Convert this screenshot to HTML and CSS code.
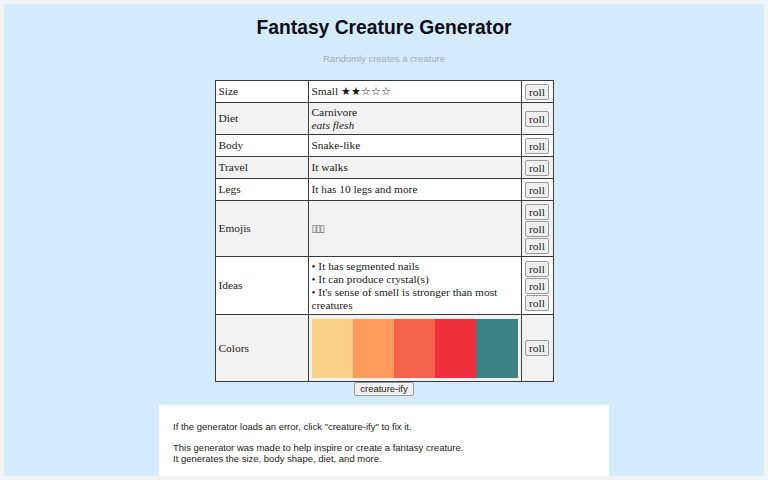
FILE: index.html
```html
<!DOCTYPE html>
<html lang="en">
<head>
<meta charset="utf-8">
<title>Fantasy Creature Generator</title>
<link rel="stylesheet" href="styles.css">
</head>
<body>
<div class="page">
  <h1 class="title">Fantasy Creature Generator</h1>
  <p class="subtitle">Randomly creates a creature</p>
  <table class="gen">
    <tr class="odd">
      <td class="label">Size</td>
      <td class="value">Small ★★☆☆☆</td>
      <td class="act"><button class="roll">roll</button></td>
    </tr>
    <tr class="even">
      <td class="label">Diet</td>
      <td class="value">Carnivore<br><i>eats flesh</i></td>
      <td class="act"><button class="roll">roll</button></td>
    </tr>
    <tr class="odd">
      <td class="label">Body</td>
      <td class="value">Snake-like</td>
      <td class="act"><button class="roll">roll</button></td>
    </tr>
    <tr class="even">
      <td class="label">Travel</td>
      <td class="value">It walks</td>
      <td class="act"><button class="roll">roll</button></td>
    </tr>
    <tr class="odd">
      <td class="label">Legs</td>
      <td class="value">It has 10 legs and more</td>
      <td class="act"><button class="roll">roll</button></td>
    </tr>
    <tr class="even">
      <td class="label">Emojis</td>
      <td class="value"><span class="emoji">▯▯▯</span></td>
      <td class="act"><div class="stack"><button class="roll">roll</button><button class="roll">roll</button><button class="roll">roll</button></div></td>
    </tr>
    <tr class="odd">
      <td class="label">Ideas</td>
      <td class="value">• It has segmented nails<br>• It can produce crystal(s)<br>• It's sense of smell is stronger than most creatures</td>
      <td class="act"><div class="stack"><button class="roll">roll</button><button class="roll">roll</button><button class="roll">roll</button></div></td>
    </tr>
    <tr class="even">
      <td class="label">Colors</td>
      <td class="value">
        <div class="swatches">
          <div class="sw sw1"></div>
          <div class="sw sw2"></div>
          <div class="sw sw3"></div>
          <div class="sw sw4"></div>
          <div class="sw sw5"></div>
        </div>
      </td>
      <td class="act"><button class="roll">roll</button></td>
    </tr>
  </table>
  <div class="go"><button class="ify">creature-ify</button></div>
  <div class="card">
    <p>If the generator loads an error, click "creature-ify" to fix it.</p>
    <p>This generator was made to help inspire or create a fantasy creature.<br>It generates the size, body shape, diet, and more.</p>
    <p>Made by a fan of creatures.</p>
  </div>
</div>
</body>
</html>
```

FILE: styles.css
```css
html, body {
  margin: 0;
  padding: 0;
}
body {
  background: #f2f2f2;
  padding: 4px;
  height: 480px;
  box-sizing: border-box;
  font-family: "Liberation Sans", Arial, sans-serif;
}
.page {
  background: #d4eafd;
  height: 472px;
  overflow: hidden;
  display: flex;
  flex-direction: column;
  align-items: center;
}
.title {
  margin: 13px 0 0;
  font-size: 19.3px;
  line-height: 22px;
  font-weight: bold;
  color: #0c0c18;
}
.subtitle {
  margin: 13.5px 0 0;
  font-size: 9.5px;
  line-height: 11px;
  color: #a3adb9;
}
.gen {
  margin-top: 16.5px;
  border-collapse: collapse;
  font-family: "Liberation Serif", "Times New Roman", serif;
  font-size: 11.4px;
  line-height: 13px;
  color: #1a1a1a;
  width: 338px;
  table-layout: fixed;
}
.gen td {
  border: 1px solid #3a3a3a;
  padding: 2.5px 3px;
  vertical-align: middle;
}
.gen .label { width: 86px; }
.gen .value { width: 206px; }
.gen .act { width: 25px; text-align: center; }
.odd { background: #ffffff; }
.even { background: #f2f2f2; }
.emoji {
  font-family: "DejaVu Sans", sans-serif;
  font-size: 10px;
  letter-spacing: -1.5px;
  color: #555;
}
.stack {
  display: flex;
  flex-direction: column;
  align-items: center;
  gap: 1px;
}
.roll {
  display: block;
  margin: 0 auto;
  height: 16px;
  padding: 0 3px;
  font-family: "Liberation Serif", "Times New Roman", serif;
  font-size: 11.4px;
  line-height: 14px;
  color: #222;
  background: #efefef;
  border: 1px solid #999;
  border-radius: 2px;
}
.swatches {
  display: flex;
  height: 59px;
  margin: 1px 0;
}
.sw { flex: 1; }
.sw1 { background: #fad089; }
.sw2 { background: #ff9c5b; }
.sw3 { background: #f5634a; }
.sw4 { background: #ed303c; }
.sw5 { background: #3b8183; }
.go {
  display: flex;
  justify-content: center;
}
.ify {
  height: 14px;
  padding: 0 5px;
  font-family: "Liberation Sans", Arial, sans-serif;
  font-size: 9.5px;
  line-height: 12px;
  color: #222;
  background: #efefef;
  border: 1px solid #999;
  border-radius: 2px;
}
.card {
  margin-top: 9px;
  width: 450px;
  box-sizing: border-box;
  background: #ffffff;
  padding: 16px 14px 16px;
  font-size: 9.5px;
  line-height: 11px;
  color: #222;
  flex-shrink: 0;
}
.card p {
  margin: 0 0 10px;
}
```
